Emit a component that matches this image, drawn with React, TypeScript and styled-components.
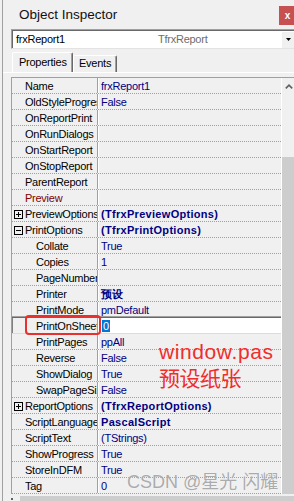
import React from "react";
import styled, { createGlobalStyle, css } from "styled-components";

const GlobalStyle = createGlobalStyle`
  html, body { margin: 0; padding: 0; background: #f0f0f0; }
  body {
    width: 294px; height: 501px; overflow: hidden;
    font-family: "Liberation Sans", Arial, sans-serif;
  }
`;

const Root = styled.div`
  width: 294px;
  height: 501px;
  padding-left: 2px;
  box-sizing: border-box;
  background: #f0f0f0;
  overflow: hidden;
`;

const Window = styled.div`
  position: relative;
  height: 100%;
  border-left: 1px solid #a0a0a0;
  display: flex;
  flex-direction: column;
  box-sizing: border-box;
`;

const TitleBar = styled.div`
  height: 29px;
  flex: none;
  display: flex;
  justify-content: space-between;
  align-items: flex-start;
`;

const Title = styled.div`
  padding: 7px 0 0 16px;
  font-size: 13.5px;
  line-height: 16px;
  color: #111;
`;

const CloseBtn = styled.div`
  width: 17px;
  height: 19px;
  margin-top: 6px;
  margin-right: -2px;
  background: #c75050;
  color: #fff;
  font-size: 10px;
  font-weight: bold;
  display: flex;
  align-items: center;
  justify-content: center;
  padding-bottom: 1px;
  box-sizing: border-box;
`;

const Combo = styled.div`
  height: 20px;
  flex: none;
  margin-left: 8px;
  box-sizing: border-box;
  display: flex;
  background: #fff;
  border-top: 1px solid #a0a0a0;
  border-left: 1px solid #a0a0a0;
  border-bottom: 1px solid #e3e3e3;
  box-shadow: inset 1px 1px 0 #696969;
`;

const ComboName = styled.span`
  width: 142px;
  padding: 1px 0 0 3px;
  margin-left: 1px;
  font-size: 11px;
  line-height: 17px;
  letter-spacing: -0.25px;
  color: #000;
`;

const ComboClass = styled.span`
  flex: 1;
  padding-top: 1px;
  font-size: 11px;
  line-height: 17px;
  letter-spacing: -0.25px;
  color: #6d6d6d;
`;

const DropBtn = styled.div`
  width: 13px;
  height: 16px;
  align-self: center;
  margin-top: 1px;
  box-sizing: border-box;
  background: #f0f0f0;
  border-left: 1px solid #fff;
  display: flex;
  align-items: center;
  justify-content: center;
`;

const TabStrip = styled.div`
  height: 23px;
  flex: none;
  display: flex;
  align-items: flex-end;
  padding-left: 9px;
`;

const Tab = styled.div<{ $active?: boolean }>`
  box-sizing: border-box;
  font-size: 11px;
  line-height: 15px;
  letter-spacing: -0.25px;
  color: #000;
  border-top: 1px solid #fff;
  border-left: 1px solid #fff;
  border-right: 1px solid #696969;
  box-shadow: inset -1px 0 0 #a0a0a0;
  border-radius: 2px 2px 0 0;
  ${(p) =>
    p.$active
      ? css`
          width: 61px;
          height: 20px;
          padding: 2px 0 0 6px;
        `
      : css`
          width: 44px;
          height: 17px;
          padding: 0 0 0 5px;
        `}
`;

const PageBody = styled.div`
  flex: none;
  border-top: 1px solid #fff;
  padding-top: 4px;
  display: flex;
  flex-direction: column;
`;

const GridRow = styled.div`
  margin-left: 8px;
  display: flex;
  border-top: 1px solid #a0a0a0;
`;

const Grid = styled.div`
  width: 270px;
  box-sizing: border-box;
  border-left: 1px solid #a0a0a0;
  display: flex;
  flex-direction: column;
`;

const Row = styled.div<{ $selected?: boolean; $preSel?: boolean }>`
  height: 16px;
  box-sizing: border-box;
  display: flex;
  border-bottom: 1px dotted #a0a0a0;
  font-size: 11px;
  ${(p) =>
    p.$preSel &&
    css`
      border-bottom: 1px solid #696969;
      box-shadow: inset 0 -1px 0 #a0a0a0;
    `}
  ${(p) =>
    p.$selected &&
    css`
      border-bottom: 1px solid #dcdcdc;
      box-shadow: inset 1px 0 0 #808080;
    `}
`;

const NameCell = styled.div<{ $color?: string }>`
  width: 86px;
  flex: none;
  box-sizing: border-box;
  border-right: 1px solid #a0a0a0;
  padding: 1px 0 0 2px;
  display: flex;
  align-items: flex-start;
  overflow: hidden;
  white-space: nowrap;
  line-height: 14px;
  letter-spacing: -0.25px;
  color: ${(p) => p.$color || "#000"};
`;

const NameText = styled.span`
  flex: 1;
  min-width: 0;
  overflow: hidden;
  text-overflow: clip;
`;

const Slot = styled.span`
  width: 11px;
  flex: none;
  height: 14px;
  display: flex;
  align-items: center;
`;

const ValueCell = styled.div<{ $bold?: boolean; $white?: boolean }>`
  flex: 1;
  box-sizing: border-box;
  border-left: 1px solid #fff;
  padding: 1px 0 0 2px;
  line-height: 14px;
  white-space: nowrap;
  overflow: hidden;
  color: #000080;
  letter-spacing: ${(p) => (p.$bold ? "0.3px" : "-0.25px")};
  font-weight: ${(p) => (p.$bold ? "bold" : "normal")};
  background: ${(p) => (p.$white ? "#fff" : "transparent")};
`;

const Sel = styled.span`
  background: #0078d7;
  color: #fff;
  padding: 0 1px;
  margin-left: 1px;
`;

const ScrollBar = styled.div`
  width: 13px;
  box-sizing: border-box;
  border-left: 1px solid #fff;
  display: flex;
  flex-direction: column;
  background: #f0f0f0;
`;

const ScrollUp = styled.div`
  height: 17px;
  flex: none;
  display: flex;
  align-items: center;
  justify-content: center;
  padding-left: 2px;
`;

const Thumb = styled.div<{ $offset: number }>`
  flex: 1;
  margin-top: ${(p) => p.$offset}px;
  background: #cdcdcd;
`;

const HScroll = styled.div`
  flex: none;
  margin: 2px 0 0 8px;
  height: 5px;
  display: flex;
  align-items: flex-end;
`;

const HArrow = styled.div`
  width: 2px;
  height: 2px;
  margin-bottom: 1px;
  background: #606060;
`;

const HBar = styled.div`
  flex: 1;
  height: 5px;
  margin-left: 7px;
  background: #cdcdcd;
`;

const Marker = styled.div`
  position: absolute;
  left: 22px;
  top: 315px;
  width: 76px;
  height: 20px;
  box-sizing: border-box;
  border: 2px solid #e8302e;
  border-radius: 4px;
`;

const Annotation = styled.div`
  position: absolute;
  left: 156px;
  top: 338px;
  color: #ef2d2d;
  font-family: "Liberation Sans", "Noto Sans CJK SC", sans-serif;
  font-size: 21px;
`;

const AnnLine = styled.div<{ $spacing: number }>`
  line-height: 27px;
  height: 27px;
  letter-spacing: ${(p) => p.$spacing}px;
  white-space: nowrap;
`;

const Watermark = styled.div`
  position: absolute;
  left: 124px;
  top: 472px;
  font-family: "Liberation Sans", "Noto Sans CJK SC", sans-serif;
  font-size: 18px;
  line-height: 20px;
  color: rgba(150, 150, 150, 0.8);
  text-shadow: 0 0 1px rgba(255, 255, 255, 0.8);
  white-space: nowrap;
`;

type Prop = {
  name: string;
  value?: string;
  level?: 0 | 1;
  expand?: "plus" | "minus";
  bold?: boolean;
  nameColor?: string;
  selected?: boolean;
};

const props: Prop[] = [
  { name: "Name", value: "frxReport1" },
  { name: "OldStyleProgress", value: "False" },
  { name: "OnReportPrint" },
  { name: "OnRunDialogs" },
  { name: "OnStartReport" },
  { name: "OnStopReport" },
  { name: "ParentReport" },
  { name: "Preview", nameColor: "#800000" },
  { name: "PreviewOptions", value: "(TfrxPreviewOptions)", expand: "plus", bold: true },
  { name: "PrintOptions", value: "(TfrxPrintOptions)", expand: "minus", bold: true },
  { name: "Collate", value: "True", level: 1 },
  { name: "Copies", value: "1", level: 1 },
  { name: "PageNumbers", value: "", level: 1 },
  { name: "Printer", value: "预设", level: 1, bold: true },
  { name: "PrintMode", value: "pmDefault", level: 1 },
  { name: "PrintOnSheet", value: "0", level: 1, selected: true },
  { name: "PrintPages", value: "ppAll", level: 1 },
  { name: "Reverse", value: "False", level: 1 },
  { name: "ShowDialog", value: "True", level: 1 },
  { name: "SwapPageSize", value: "False", level: 1 },
  { name: "ReportOptions", value: "(TfrxReportOptions)", expand: "plus", bold: true },
  { name: "ScriptLanguage", value: "PascalScript", bold: true },
  { name: "ScriptText", value: "(TStrings)" },
  { name: "ShowProgress", value: "True" },
  { name: "StoreInDFM", value: "True" },
  { name: "Tag", value: "0" },
];

const ExpandBox = ({ kind }: { kind: "plus" | "minus" }) => (
  <svg width="9" height="9" viewBox="0 0 9 9">
    <rect x="0.5" y="0.5" width="8" height="8" fill="none" stroke="#000" />
    <line x1="2" y1="4.5" x2="7" y2="4.5" stroke="#000" />
    {kind === "plus" && <line x1="4.5" y1="2" x2="4.5" y2="7" stroke="#000" />}
  </svg>
);

export default function App() {
  return (
    <Root>
      <GlobalStyle />
      <Window>
        <TitleBar>
          <Title>Object Inspector</Title>
          <CloseBtn>x</CloseBtn>
        </TitleBar>
        <Combo>
          <ComboName>frxReport1</ComboName>
          <ComboClass>TfrxReport</ComboClass>
          <DropBtn>
            <svg width="5" height="3" viewBox="0 0 5 3">
              <polygon points="0,0 5,0 2.5,3" fill="#000" />
            </svg>
          </DropBtn>
        </Combo>
        <TabStrip>
          <Tab $active>Properties</Tab>
          <Tab>Events</Tab>
        </TabStrip>
        <PageBody>
          <GridRow>
            <Grid>
              {props.map((p, i) => {
                const preSel = props[i + 1]?.selected;
                return (
                  <Row key={p.name} $selected={p.selected} $preSel={preSel}>
                    <NameCell $color={p.nameColor}>
                      <Slot>{p.expand && <ExpandBox kind={p.expand} />}</Slot>
                      {p.level === 1 && <Slot />}
                      <NameText>{p.name}</NameText>
                    </NameCell>
                    <ValueCell $bold={p.bold} $white={p.selected}>
                      {p.selected ? <Sel>{p.value}</Sel> : p.value}
                    </ValueCell>
                  </Row>
                );
              })}
            </Grid>
            <ScrollBar>
              <ScrollUp>
                <svg width="8" height="5" viewBox="0 0 8 5">
                  <polyline points="0.8,4.4 4,1.2 7.2,4.4" fill="none" stroke="#606060" strokeWidth="1.6" />
                </svg>
              </ScrollUp>
              <Thumb $offset={62} />
            </ScrollBar>
          </GridRow>
        </PageBody>
        <HScroll>
          <HArrow />
          <HBar />
        </HScroll>
        <Marker />
        <Annotation>
          <AnnLine $spacing={0.6}>window.pas</AnnLine>
          <AnnLine $spacing={-0.5}>预设纸张</AnnLine>
        </Annotation>
        <Watermark>CSDN @星光 闪耀</Watermark>
      </Window>
    </Root>
  );
}
